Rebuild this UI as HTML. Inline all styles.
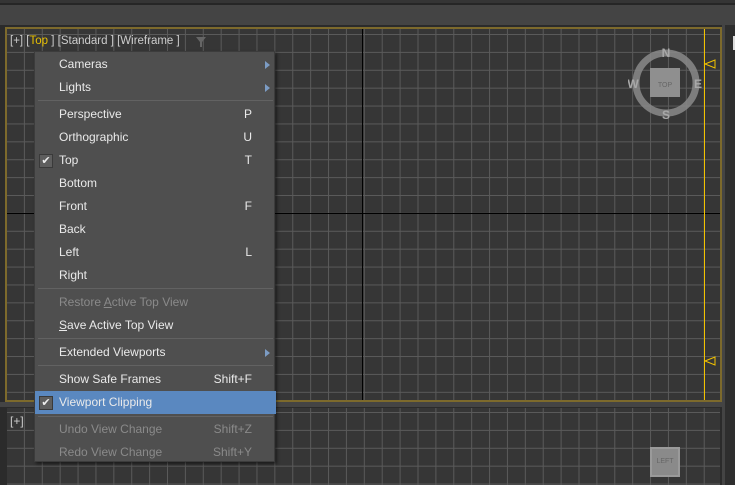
<!DOCTYPE html><html><head><style>
*{margin:0;padding:0;box-sizing:border-box}
body{width:735px;height:485px;overflow:hidden;background:#2b2b2b;font-family:"Liberation Sans",sans-serif;font-size:12px;position:relative}
.a{position:absolute}
.grid{background-color:#363636;background-image:linear-gradient(90deg,#5a5a5a 1px,transparent 1px),linear-gradient(#5a5a5a 1px,transparent 1px);background-size:17.9px 17.9px}
.mi{position:absolute;left:0;width:241px;height:23px;line-height:23px;color:#eaeaea;padding-left:24px}
.mi .k{position:absolute;right:24px;top:0}
.dis{color:#8a8a8a}
.sep{position:absolute;left:3px;width:235px;height:1px;background:#626262}
.arr{position:absolute;right:6px;top:8px;width:0;height:0;border-left:5px solid #7c9cc4;border-top:4px solid transparent;border-bottom:4px solid transparent}
.chk{position:absolute;left:4px;top:5px;width:14px;height:14px;background:#5e5e5e;border:1px solid #3a3a3a;color:#eee;font-size:11px;line-height:12px;text-align:center}
</style></head><body>
<div class="a" style="left:0;top:0;width:735px;height:3px;background:#353535"></div>
<div class="a" style="left:0;top:3px;width:735px;height:2px;background:#262626"></div>
<div class="a" style="left:0;top:5px;width:735px;height:20px;background:#444"></div>
<div class="a grid" style="left:7px;top:29px;width:713px;height:371px;background-position:-1px 5px"></div>
<div class="a" style="left:362px;top:29px;width:1px;height:371px;background:#000"></div>
<div class="a" style="left:7px;top:213px;width:713px;height:1px;background:#000"></div>
<div class="a" style="left:5px;top:27px;width:717px;height:375px;border:2px solid #7d6a2c"></div>
<div class="a" style="left:704px;top:29px;width:1px;height:371px;background:#f2c200"></div>
<svg class="a" style="left:704px;top:58px" width="14" height="14"><path d="M1 6 L11 2 L11 10 Z" fill="none" stroke="#f2c200"/></svg>
<svg class="a" style="left:704px;top:355px" width="14" height="14"><path d="M1 6 L11 2 L11 10 Z" fill="none" stroke="#f2c200"/></svg>
<svg class="a" style="left:628px;top:46px" width="76" height="76">
<circle cx="38" cy="37" r="30" fill="none" stroke="#8a8a8a" stroke-width="7" opacity=".85"/>
<rect x="22" y="22" width="30" height="29" fill="#8f8f8f"/>
<text x="37" y="41" font-size="7" fill="#666" text-anchor="middle" font-family="Liberation Sans">TOP</text>
<text x="38" y="11" font-size="12" font-weight="bold" fill="#a8a8a8" text-anchor="middle" font-family="Liberation Sans">N</text>
<text x="38" y="73" font-size="12" font-weight="bold" fill="#a8a8a8" text-anchor="middle" font-family="Liberation Sans">S</text>
<text x="5" y="42" font-size="12" font-weight="bold" fill="#a8a8a8" text-anchor="middle" font-family="Liberation Sans">W</text>
<text x="70" y="42" font-size="12" font-weight="bold" fill="#a8a8a8" text-anchor="middle" font-family="Liberation Sans">E</text>
</svg>
<div class="a" style="left:10px;top:35px;color:#ccc;font-size:11.5px;white-space:pre">[+] [<span style="color:#e8c000">Top</span> ] [Standard ] [Wireframe ]</div>
<svg class="a" style="left:195px;top:36px" width="12" height="12"><path d="M1 1H11L7 6V11L5 11V6Z" fill="#666"/></svg>
<div class="a" style="left:722px;top:25px;width:3px;height:460px;background:#444"></div>
<div class="a" style="left:725px;top:25px;width:10px;height:460px;background:#2e2e2e"></div>
<div class="a" style="left:733px;top:36px;width:2px;height:14px;border:1px solid #ddd"></div>
<div class="a" style="left:0;top:402px;width:722px;height:5px;background:#444"></div>
<div class="a grid" style="left:7px;top:408px;width:713px;height:77px;background-position:-1px 4px"></div>
<div class="a" style="left:10px;top:414px;color:#ccc;font-size:12px">[+]</div>
<div class="a" style="left:650px;top:447px;width:30px;height:30px;background:#8a8a8a;border:2px solid #9a9a9a;color:#666;font-size:7px;text-align:center;line-height:26px">LEFT</div>
<div class="a" style="left:34px;top:51px;width:241px;height:411px;background:#4f4f4f;border:1px solid #3c3c3c;box-shadow:2px 2px 3px rgba(0,0,0,.5)">
<div class="mi" style="top:1px">Cameras<div class="arr"></div></div>
<div class="mi" style="top:24px">Lights<div class="arr"></div></div>
<div class="sep" style="top:48px"></div>
<div class="mi" style="top:51px">Perspective<span class="k">P</span></div>
<div class="mi" style="top:74px">Orthographic<span class="k">U</span></div>
<div class="mi" style="top:97px"><div class="chk">✔</div>Top<span class="k">T</span></div>
<div class="mi" style="top:120px">Bottom</div>
<div class="mi" style="top:143px">Front<span class="k">F</span></div>
<div class="mi" style="top:166px">Back</div>
<div class="mi" style="top:189px">Left<span class="k">L</span></div>
<div class="mi" style="top:212px">Right</div>
<div class="sep" style="top:236px"></div>
<div class="mi dis" style="top:239px">Restore <u>A</u>ctive Top View</div>
<div class="mi" style="top:262px"><u>S</u>ave Active Top View</div>
<div class="sep" style="top:286px"></div>
<div class="mi" style="top:289px">Extended Viewports<div class="arr"></div></div>
<div class="sep" style="top:313px"></div>
<div class="mi" style="top:316px">Show Safe Frames<span class="k">Shift+F</span></div>
<div class="mi" style="top:339px;background:#5a88c0"><div class="chk">✔</div>Viewport Clipping</div>
<div class="sep" style="top:364px"></div>
<div class="mi dis" style="top:366px">Undo View Change<span class="k">Shift+Z</span></div>
<div class="mi dis" style="top:389px">Redo View Change<span class="k">Shift+Y</span></div>
</div>
</body></html>
